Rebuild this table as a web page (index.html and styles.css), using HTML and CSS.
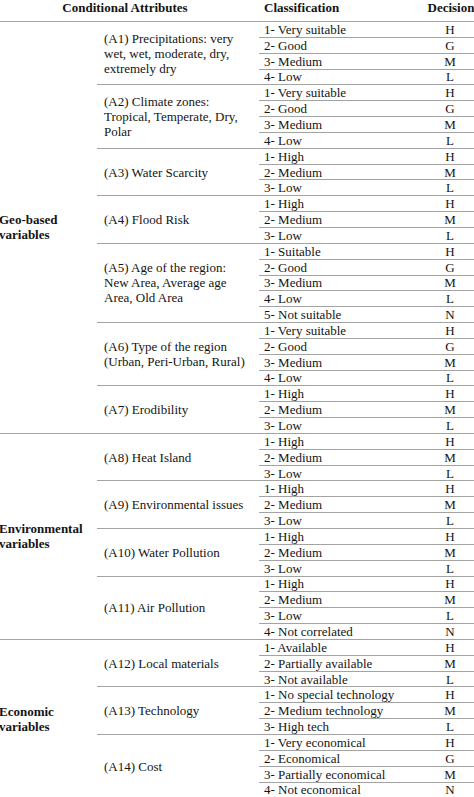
FILE: index.html
```html
<!DOCTYPE html>
<html lang="en">
<head>
<meta charset="utf-8">
<title>Conditional Attributes</title>
<link rel="stylesheet" href="styles.css">
</head>
<body>
<div class="table">
  <div class="hd hd-attr">Conditional Attributes</div>
  <div class="hd hd-cls">Classification</div>
  <div class="hd hd-dec">Decision</div>

  <div class="sec s26">Geo-based<br>variables</div>

  <div class="attr r4">(A1) Precipitations: very<br>wet, wet, moderate, dry,<br>extremely dry</div>
  <div class="cls">1- Very suitable</div><div class="dec">H</div>
  <div class="cls">2- Good</div><div class="dec">G</div>
  <div class="cls">3- Medium</div><div class="dec">M</div>
  <div class="cls">4- Low</div><div class="dec">L</div>

  <div class="attr r4">(A2) Climate zones:<br>Tropical, Temperate, Dry,<br>Polar</div>
  <div class="cls">1- Very suitable</div><div class="dec">H</div>
  <div class="cls">2- Good</div><div class="dec">G</div>
  <div class="cls">3- Medium</div><div class="dec">M</div>
  <div class="cls">4- Low</div><div class="dec">L</div>

  <div class="attr r3">(A3) Water Scarcity</div>
  <div class="cls">1- High</div><div class="dec">H</div>
  <div class="cls">2- Medium</div><div class="dec">M</div>
  <div class="cls">3- Low</div><div class="dec">L</div>

  <div class="attr r3">(A4) Flood Risk</div>
  <div class="cls">1- High</div><div class="dec">H</div>
  <div class="cls">2- Medium</div><div class="dec">M</div>
  <div class="cls">3- Low</div><div class="dec">L</div>

  <div class="attr r5">(A5) Age of the region:<br>New Area, Average age<br>Area, Old Area</div>
  <div class="cls">1- Suitable</div><div class="dec">H</div>
  <div class="cls">2- Good</div><div class="dec">G</div>
  <div class="cls">3- Medium</div><div class="dec">M</div>
  <div class="cls">4- Low</div><div class="dec">L</div>
  <div class="cls">5- Not suitable</div><div class="dec">N</div>

  <div class="attr r4">(A6) Type of the region<br>(Urban, Peri-Urban, Rural)</div>
  <div class="cls">1- Very suitable</div><div class="dec">H</div>
  <div class="cls">2- Good</div><div class="dec">G</div>
  <div class="cls">3- Medium</div><div class="dec">M</div>
  <div class="cls">4- Low</div><div class="dec">L</div>

  <div class="attr r3">(A7) Erodibility</div>
  <div class="cls">1- High</div><div class="dec">H</div>
  <div class="cls">2- Medium</div><div class="dec">M</div>
  <div class="cls">3- Low</div><div class="dec">L</div>

  <div class="sec s13">Environmental<br>variables</div>

  <div class="attr r3">(A8) Heat Island</div>
  <div class="cls">1- High</div><div class="dec">H</div>
  <div class="cls">2- Medium</div><div class="dec">M</div>
  <div class="cls">3- Low</div><div class="dec">L</div>

  <div class="attr r3">(A9) Environmental issues</div>
  <div class="cls">1- High</div><div class="dec">H</div>
  <div class="cls">2- Medium</div><div class="dec">M</div>
  <div class="cls">3- Low</div><div class="dec">L</div>

  <div class="attr r3">(A10) Water Pollution</div>
  <div class="cls">1- High</div><div class="dec">H</div>
  <div class="cls">2- Medium</div><div class="dec">M</div>
  <div class="cls">3- Low</div><div class="dec">L</div>

  <div class="attr r4">(A11) Air Pollution</div>
  <div class="cls">1- High</div><div class="dec">H</div>
  <div class="cls">2- Medium</div><div class="dec">M</div>
  <div class="cls">3- Low</div><div class="dec">L</div>
  <div class="cls">4- Not correlated</div><div class="dec">N</div>

  <div class="sec s10">Economic<br>variables</div>

  <div class="attr r3">(A12) Local materials</div>
  <div class="cls">1- Available</div><div class="dec">H</div>
  <div class="cls">2- Partially available</div><div class="dec">M</div>
  <div class="cls">3- Not available</div><div class="dec">L</div>

  <div class="attr r3">(A13) Technology</div>
  <div class="cls">1- No special technology</div><div class="dec">H</div>
  <div class="cls">2- Medium technology</div><div class="dec">M</div>
  <div class="cls">3- High tech</div><div class="dec">L</div>

  <div class="attr r4">(A14) Cost</div>
  <div class="cls">1- Very economical</div><div class="dec">H</div>
  <div class="cls">2- Economical</div><div class="dec">G</div>
  <div class="cls">3- Partially economical</div><div class="dec">M</div>
  <div class="cls">4- Not economical</div><div class="dec">N</div>
</div>
</body>
</html>
```

FILE: styles.css
```css
html, body {
  margin: 0;
  padding: 0;
  background: #ffffff;
}

body {
  width: 474px;
  height: 797px;
  overflow: hidden;
  font-family: "Liberation Serif", "Times New Roman", serif;
  font-size: 13px;
  color: #141414;
}

.table {
  display: grid;
  grid-template-columns: 97px 162px 161px 60px;
  grid-template-rows: 22px repeat(49, 15.85px);
  width: 480px;
}

.table > div {
  box-sizing: border-box;
  border-bottom: 1px solid #a3a3a3;
  display: flex;
  align-items: center;
  line-height: 15px;
  white-space: nowrap;
}

.hd {
  font-weight: bold;
  align-items: flex-start !important;
  padding-top: 0;
}

.hd-attr {
  grid-column: 1 / span 2;
  justify-content: center;
  padding-right: 9px;
}

.hd-cls {
  grid-column: 3;
  padding-left: 5px;
}

.hd-dec {
  grid-column: 4;
  justify-content: center;
  padding-left: 2px;
}

.sec {
  grid-column: 1;
  font-weight: bold;
  margin-left: -1px;
}

.s26 { grid-row: span 26; }
.s13 { grid-row: span 13; }
.s10 { grid-row: span 10; }

.attr {
  grid-column: 2;
  padding-left: 7px;
}

.r3 { grid-row: span 3; }
.r4 { grid-row: span 4; }
.r5 { grid-row: span 5; }

.cls {
  grid-column: 3;
  padding-left: 5px;
}

.dec {
  grid-column: 4;
  justify-content: center;
}
```
